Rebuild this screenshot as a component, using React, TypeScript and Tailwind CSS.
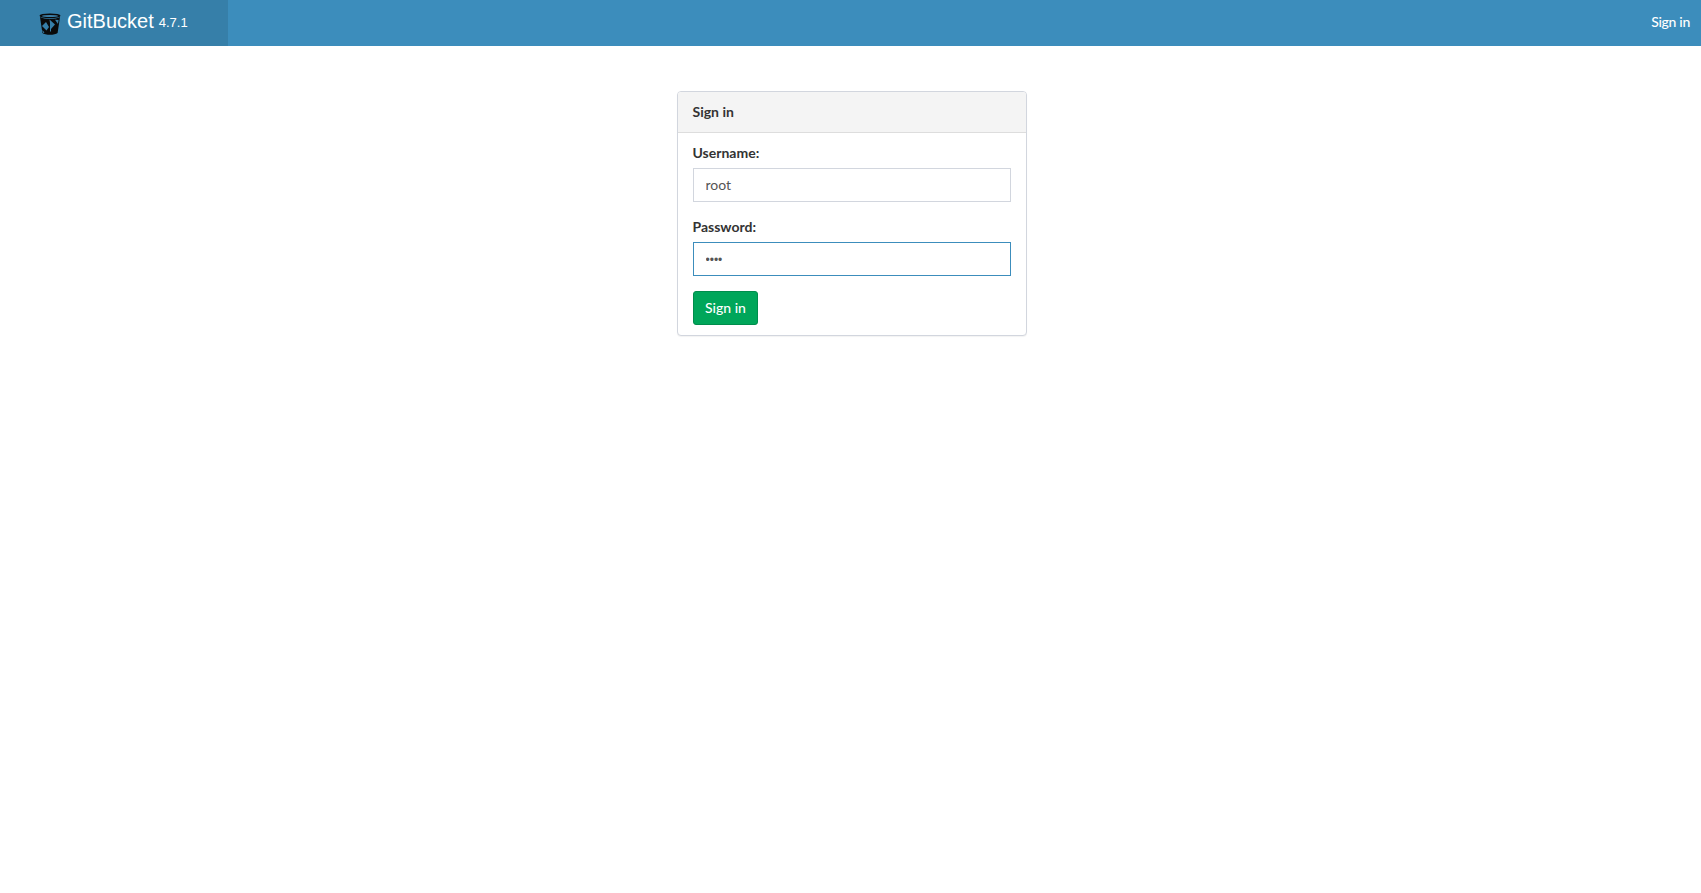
export default function App() {
  return (
    <div className="min-h-[893px] bg-white font-['Lato','Noto_Sans',sans-serif] text-[14px] leading-[20px] text-[#333]">
      <header className="flex h-[46px] items-stretch justify-between bg-[#3c8dbc]">
        <div className="flex w-[228px] items-center bg-[#367fa9] pl-[39px] font-['Liberation_Sans',sans-serif] text-white">
          <svg width="22" height="22" viewBox="0 0 22 22" className="mt-[1px] shrink-0">
            <ellipse cx="11" cy="2.8" rx="10.5" ry="2.4" fill="#0a0a0a" />
            <ellipse cx="11" cy="3" rx="8" ry="1" fill="#3c7fa8" />
            <path d="M1 4 C5 6.5 17 6.5 21 4 L18.6 20 C16 22.4 6 22.4 3.4 20 Z" fill="#0a0a0a" />
            <path d="M7 9 L3 13 L7.5 17.5 L10 14 Z" fill="#367fa9" />
            <path d="M10.5 6.5 L16 11.5 L12 16 L12 18.5 L11 18.5 L11 10 Z" fill="#367fa9" />
            <path d="M19.6 7 L16 6.8 L19 11 Z" fill="#367fa9" />
            <path d="M3.2 17 L5.5 19.5 L4 20 Z" fill="#367fa9" />
          </svg>
          <span className="ml-[6px] -mt-[4px] text-[20px] leading-[20px]">GitBucket</span>
          <span className="ml-[5px] -mt-[1px] text-[13px] leading-[20px]">4.7.1</span>
        </div>
        <a className="flex items-center pr-[11px] pb-[3px] text-[14px] font-medium tracking-[-0.3px] text-white">Sign in</a>
      </header>
      <main className="flex justify-center pt-[45px] pl-[2px]">
        <div className="w-[350px] rounded-[4px] border border-[#d2d6de] bg-white shadow-[0_1px_1px_rgba(0,0,0,0.05)]">
          <div className="h-[41px] rounded-t-[3px] border-b border-[#ddd] bg-[#f4f4f4] px-[15px] pt-[10px] font-bold text-[14px]">
            Sign in
          </div>
          <form className="flex flex-col gap-[15px] px-[15px] pt-[10px] pb-[10px]">
            <div>
              <label className="mb-[5px] block h-[20px] font-bold">Username:</label>
              <input
                type="text"
                defaultValue="root"
                className="block h-[34px] w-full border border-[#d2d6de] bg-white px-[12px] pb-[2px] text-[14px] text-[#555] outline-none"
              />
            </div>
            <div>
              <label className="mb-[5px] block h-[20px] font-bold">Password:</label>
              <input
                type="password"
                defaultValue="root"
                className="block h-[34px] w-full border border-[#3c8dbc] bg-white px-[12px] pt-[2px] font-['Liberation_Sans',sans-serif] text-[12px] text-[#555] outline-none"
              />
            </div>
            <div>
              <button
                type="button"
                className="h-[34px] w-[65px] rounded-[3px] border border-[#008d4c] bg-[#00a65a] pl-[1px] text-center text-[14px] font-medium text-white"
              >
                Sign in
              </button>
            </div>
          </form>
        </div>
      </main>
    </div>
  );
}
